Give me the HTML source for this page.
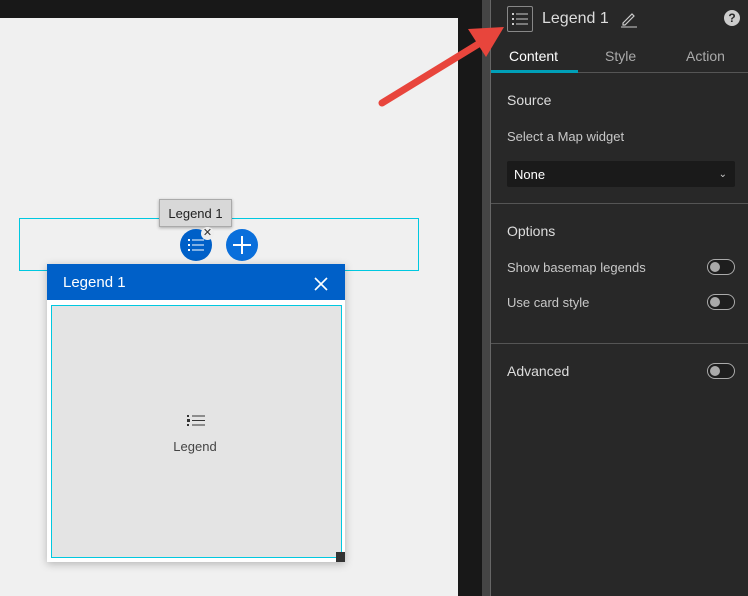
<!DOCTYPE html>
<html><head><meta charset="utf-8"><style>
*{margin:0;padding:0;box-sizing:border-box}
body{width:748px;height:596px;overflow:hidden;background:#181818;font-family:"Liberation Sans",sans-serif;position:relative}
.a{position:absolute}
.t{color:#c8c8c8;font-size:13px}
.tog{position:absolute;left:707px;width:28px;height:16px;border:1px solid #aaa;border-radius:8px;background:#1e1e1e}
.tog:after{content:"";position:absolute;left:2px;top:2px;width:10px;height:10px;border-radius:50%;background:#aaa}
</style></head><body>
<div class="a" style="left:0;top:0;width:458px;height:18px;background:#181818"></div>
<div class="a" style="left:0;top:18px;width:458px;height:578px;background:#f0f0f0"></div>
<div class="a" style="left:482px;top:0;width:8px;height:596px;background:#454545"></div>
<div class="a" style="left:490px;top:0;width:1px;height:596px;background:#666"></div>
<div class="a" style="left:491px;top:0;width:257px;height:596px;background:#282828"></div>

<div class="a" style="left:19px;top:218px;width:400px;height:53px;border:1px solid #00c8e0"></div>
<div class="a" style="left:159px;top:199px;width:73px;height:28px;background:#d8d8d8;border:1px solid #aaa;box-shadow:0 1px 3px rgba(0,0,0,.3);font-size:13px;color:#222;text-align:center;line-height:27px">Legend 1</div>
<div class="a" style="left:180px;top:229px;width:32px;height:32px;border-radius:50%;background:#0060c8"></div>
<svg class="a" style="left:186px;top:236px" width="20" height="18"><g fill="#fff"><rect x="2" y="3" width="2" height="2"/><rect x="2" y="8" width="2" height="2"/><rect x="2" y="13" width="2" height="2"/><rect x="6" y="3.5" width="12" height="1"/><rect x="6" y="8.5" width="12" height="1"/><rect x="6" y="13.5" width="12" height="1"/></g></svg>
<div class="a" style="left:201px;top:227px;width:13px;height:13px;border-radius:50%;background:#eee;font-size:11px;line-height:12px;text-align:center;color:#333">✕</div>
<div class="a" style="left:226px;top:229px;width:32px;height:32px;border-radius:50%;background:#0a6fdb"></div>
<div class="a" style="left:233px;top:244px;width:18px;height:2px;background:#fff"></div>
<div class="a" style="left:241px;top:236px;width:2px;height:18px;background:#fff"></div>

<div class="a" style="left:47px;top:264px;width:298px;height:298px;background:#fff;box-shadow:0 2px 8px rgba(0,0,0,.25)"></div>
<div class="a" style="left:47px;top:264px;width:298px;height:36px;background:#0060c8;color:#fff;font-size:15px;line-height:38px;padding-left:16px">Legend 1</div>
<svg class="a" style="left:314px;top:277px" width="14" height="14"><path d="M1 1L13 13M13 1L1 13" stroke="#fff" stroke-width="1.6"/></svg>
<div class="a" style="left:51px;top:305px;width:291px;height:253px;background:#e4e4e4;border:1px solid #00c8e0"></div>
<div class="a" style="left:336px;top:552px;width:9px;height:10px;background:#333"></div>
<svg class="a" style="left:186px;top:414px" width="20" height="14"><g fill="#333"><rect x="1" y="1" width="2" height="2"/><rect x="1" y="5" width="3" height="3"/><rect x="1" y="10" width="2" height="2"/><rect x="6" y="1.5" width="13" height="1"/><rect x="6" y="6" width="13" height="1"/><rect x="6" y="10.5" width="13" height="1"/></g></svg>
<div class="a" style="left:160px;top:439px;width:70px;text-align:center;font-size:13px;color:#444">Legend</div>

<svg class="a" style="left:370px;top:15px" width="140" height="100"><path d="M12 88L110 28" stroke="#e8453c" stroke-width="7" stroke-linecap="round"/><path d="M134 12L98 14L116 42Z" fill="#e8453c"/></svg>

<div class="a" style="left:507px;top:6px;width:26px;height:26px;border:1px solid #888;border-radius:2px"></div>
<svg class="a" style="left:511px;top:11px" width="20" height="16"><g fill="#ccc"><rect x="1" y="2" width="2" height="2"/><rect x="1" y="7" width="2" height="2"/><rect x="1" y="12" width="2" height="2"/><rect x="5" y="2.5" width="12" height="1"/><rect x="5" y="7.5" width="12" height="1"/><rect x="5" y="12.5" width="12" height="1"/></g></svg>
<div class="a" style="left:542px;top:10px;font-size:16px;color:#ddd">Legend 1</div>
<svg class="a" style="left:620px;top:10px" width="18" height="18"><path d="M3 13L12 4L14 6L5 15L3 15Z" fill="none" stroke="#ccc" stroke-width="1.2"/><path d="M1 17H17" stroke="#ccc"/></svg>
<div class="a" style="left:724px;top:10px;width:16px;height:16px;border-radius:50%;background:#ccc;color:#282828;font-size:12px;font-weight:bold;text-align:center;line-height:16px">?</div>
<div class="a" style="left:491px;top:72px;width:257px;height:1px;background:#555"></div>
<div class="a" style="left:491px;top:70px;width:87px;height:3px;background:#00a0b8"></div>
<div class="a" style="left:509px;top:48px;font-size:14px;color:#fff">Content</div>
<div class="a" style="left:605px;top:48px;font-size:14px;color:#aaa">Style</div>
<div class="a" style="left:686px;top:48px;font-size:14px;color:#aaa">Action</div>
<div class="a" style="left:507px;top:92px;font-size:14px;color:#ddd">Source</div>
<div class="a t" style="left:507px;top:129px">Select a Map widget</div>
<div class="a" style="left:507px;top:161px;width:228px;height:26px;background:#1a1a1a;border-radius:2px;color:#fff;font-size:13px;line-height:27px;padding-left:7px">None<span style="position:absolute;right:8px;font-size:10px;color:#ccc">⌄</span></div>
<div class="a" style="left:491px;top:203px;width:257px;height:1px;background:#555"></div>
<div class="a" style="left:507px;top:223px;font-size:14px;color:#ddd">Options</div>
<div class="a t" style="left:507px;top:260px">Show basemap legends</div>
<div class="tog" style="top:259px"></div>
<div class="a t" style="left:507px;top:295px">Use card style</div>
<div class="tog" style="top:294px"></div>
<div class="a" style="left:491px;top:343px;width:257px;height:1px;background:#555"></div>
<div class="a" style="left:507px;top:363px;font-size:14px;color:#ddd">Advanced</div>
<div class="tog" style="top:363px"></div>
</body></html>
